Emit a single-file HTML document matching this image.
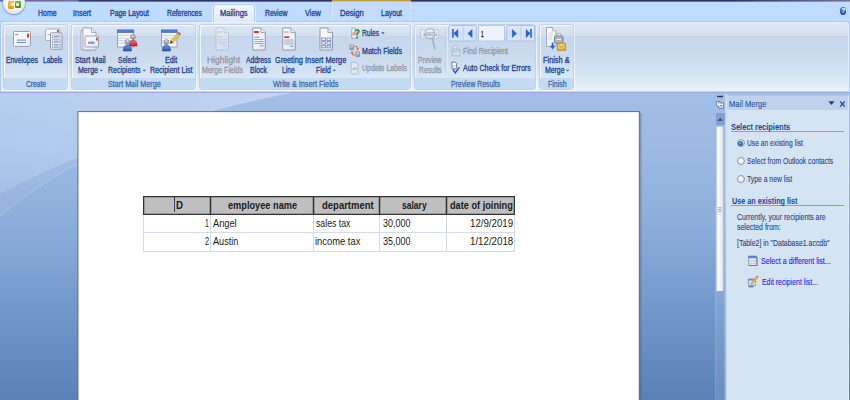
<!DOCTYPE html>
<html lang="en"><head><meta charset="utf-8"><title>Mail Merge - Word</title>
<style>
html,body{margin:0;padding:0}
body{width:850px;height:400px;overflow:hidden;position:relative;background:#bfdbff;font-family:"Liberation Sans","DejaVu Sans",sans-serif}
.abs{position:absolute}
#titlebar{left:0;top:0;width:850px;height:2.400px;background:linear-gradient(rgba(20,20,60,.2) 0,rgba(20,20,60,0) 40%,rgba(191,219,255,.6) 100%),linear-gradient(90deg,#6f6e9c 0,#7a799f 9.100%,#383d72 9.400%,#30356a 30%,#30356a 86%,#7c7ca0 100%)}
#tabrow{left:0;top:3px;width:850px;height:19px;background:#bfdbff}
#ctx{left:332px;top:3px;width:79px;height:18px;background:#c1dcff;border-left:1px solid #d3e6fc;border-right:1px solid #d3e6fc;box-sizing:border-box}
#ctxtop{left:332px;top:0;width:79px;height:2.400px;background:linear-gradient(#8f7a24 0,#d4bf50 45%,#d9d08c 100%)}
#tab-mail{left:212.500px;top:4px;width:42px;height:18px;box-sizing:border-box;border:1px solid #b3cdf0;border-bottom:none;border-radius:3.500px 3.500px 0 0;background:linear-gradient(#f3f7fd,#e6eef8 70%,#e0e9f6);box-shadow:0 0 0 1px rgba(235,243,253,.7)}
#ribbon{left:0;top:20.500px;width:850px;height:70.500px;box-sizing:border-box;border:1px solid #adcaf1;border-bottom:none;border-radius:3px 3px 0 0;box-shadow:inset 0 1px 0 #e9f1fb,inset 1px 0 0 #e3edf9,inset -1px 0 0 #e3edf9;
 background:linear-gradient(#dfe9f6 0,#d4e0f0 13px,#c6d7ed 14.300px,#cad9ee 29px,#d0e0f2 45px,#deebf8 61px,#e9f5fd 69px)}
#ribline{left:0;top:91px;width:850px;height:2px;background:linear-gradient(#b4e1ee 0,#b4e1ee 50%,#96acdc 50%,#96acdc 100%)}
.grp{top:23.500px;height:66px;box-sizing:border-box;border:1px solid #c2d1e7;border-radius:3px;overflow:hidden;
 background:transparent;box-shadow:inset 1px 1px 0 rgba(255,255,255,.7),1px 1px 0 rgba(255,255,255,.6)}
.grp i{position:absolute;left:0;right:0;bottom:0;height:11px;background:#c3daf3}
#doc{left:0;top:93px;width:850px;height:307px;background:linear-gradient(#b0caee 0,#a9c4eb 18%,#98b7e2 41%,#7c9ed1 67%,#5a7fb6 100%)}
#page{left:78px;top:111.500px;width:562px;height:288px;background:#fff;box-sizing:border-box;border-left:1px solid #4b5059;border-top:1px solid #4b5059;border-right:1px solid #8aa0c2}
#vscroll{left:715px;top:126px;width:10px;height:274px;background:linear-gradient(90deg,rgba(255,255,255,.28) 0,rgba(255,255,255,.10) 1.5px,rgba(255,255,255,.10) 8.500px,rgba(255,255,255,.3) 100%)}
#thumb{left:715.500px;top:126px;width:8.500px;height:166px;box-sizing:border-box;border:1px solid #97a9c6;border-radius:1.500px;background:linear-gradient(90deg,#e6ebf3,#fbfcfe 45%,#dfe5ee)}
#split{left:725px;top:94px;width:2px;height:306px;background:linear-gradient(90deg,rgba(255,255,255,.25),#dbe7f5)}
#pane{left:727px;top:95px;width:121.500px;height:305px;background:#d5e4f2;box-sizing:border-box;border-top:1px solid #adc7ea;border-right:1px solid #dde9f6}
#panehead{left:727px;top:96px;width:120.500px;height:13.500px;background:#bfd2ec}
.hr{height:1px;background:#7fa2d6}
.radio{width:6px;height:6px;border-radius:50%;border:1px solid #9099a8;background:radial-gradient(circle at 40% 40%,#ffffff,#d3d7de)}
table#tb{position:absolute;left:143.400px;top:196px;border-collapse:collapse;table-layout:fixed}
#tb td{padding:0;border:1px solid #d4dbea;height:17px}
#tb tr.r2 td{height:18px}
#tb tr.h td{background:#bfbfbf;border:1px solid #333;height:17px;box-shadow:inset 0 0 0 .5px rgba(60,60,60,.55)}
#texts .t{position:absolute;white-space:pre;transform-origin:0 50%;display:block}
svg{position:absolute;overflow:visible}
#upbtn{left:716px;top:112.500px;width:8.500px;height:12.500px;background:#7fa1d5;border-radius:1px}

</style></head>
<body>
<div class="abs" id="tabrow"></div>
<div class="abs" id="titlebar"></div>
<div class="abs" id="ctxtop"></div>
<div class="abs" id="ctx"></div>
<div class="abs" id="ribbon"></div>
<div class="abs" id="tab-mail"></div>
<div class="abs" id="ribline"></div>
<!-- office button -->
<div class="abs" style="left:3px;top:-8px;width:22px;height:22px;border-radius:50%;background:radial-gradient(circle at 50% 45%,#ffffff 0,#f6f8fb 45%,#dfe4ec 70%,#b4bccb 100%);box-shadow:0 0 0 .6px rgba(140,155,185,.9),0 1px 1.500px rgba(70,90,130,.55)"></div>
<div class="abs" style="left:8px;top:.500px;width:6px;height:8px;background:linear-gradient(#f8c040,#f09a10);border-radius:1px"></div>
<div class="abs" style="left:15px;top:.500px;width:5.500px;height:7.300px;background:linear-gradient(#74bc44,#3f9420);border-radius:1px"></div>
<div class="abs" style="left:11px;top:2.500px;width:3.500px;height:3.500px;background:#fbf3d4"></div>
<div class="abs" style="left:16px;top:2.500px;width:3px;height:3px;background:#e4f3d4"></div>
<!-- groups -->
<div class="abs grp" style="left:3px;width:65px"><i></i></div>
<div class="abs grp" style="left:71px;width:125px"><i></i></div>
<div class="abs grp" style="left:199px;width:212px"><i></i></div>
<div class="abs grp" style="left:414px;width:122px"><i></i></div>
<div class="abs grp" style="left:539px;width:35px"><i></i></div>
<!-- help -->
<div class="abs" style="left:839.800px;top:7.200px;width:6.600px;height:8px;border-radius:50%;background:radial-gradient(circle at 40% 30%,#5a8cf0 0,#1e52d0 50%,#0c2f9c 100%);box-shadow:0 0 0 .9px #e3ebf6,0 0 0 1.500px rgba(150,175,215,.6)"></div>
<span class="abs" style="left:841.200px;top:7.400px;font-size:7px;line-height:8px;font-weight:700;font-style:italic;color:#fff">?</span>

<!-- document area -->
<div class="abs" id="doc"></div>
<svg style="left:0;top:93px" width="850" height="307" viewBox="0 93 850 307">
  <defs><linearGradient id="swl" x1="0" y1="0" x2="1" y2="0"><stop offset="0" stop-color="#fff" stop-opacity=".07"/><stop offset="1" stop-color="#fff" stop-opacity=".2"/></linearGradient></defs>
  <path d="M0 93 H294 Q113.800 132.600 0 193.750 Z" fill="url(#swl)"/>
  <path d="M0 193.750 Q113.800 132.600 294 93 H290 Q107.900 126.500 0 216 Z" fill="#5f86c0" opacity=".07"/>
  <path d="M0 216 Q107.900 126.500 290 93 H850 V400 H0 Z" fill="#5f86c0" opacity=".17"/>
  <path d="M0 215.500 Q107.900 126 290 92.500" fill="none" stroke="#d4e3f8" stroke-width="1" opacity=".32"/>
</svg>
<svg style="left:0;top:93px" width="727" height="307" viewBox="0 93 727 307">
  <defs><linearGradient id="psh" x1="0" y1="0" x2="1" y2="0"><stop offset="0" stop-color="#3c5078" stop-opacity=".45"/><stop offset="1" stop-color="#3c5078" stop-opacity="0"/></linearGradient></defs>
  <rect x="639.600" y="113" width="3" height="290" fill="url(#psh)"/>
  <rect x="77.950" y="111.650" width="561.300" height="295" fill="#ffffff" stroke="#58616f" stroke-width=".9"/>
</svg>
<div class="abs" id="vscroll"></div>
<div class="abs" id="upbtn"></div>
<div class="abs" id="split"></div>
<div class="abs" id="pane"></div>
<div class="abs" id="panehead"></div>
<div class="abs hr" style="left:731px;top:131px;width:113px"></div>
<div class="abs hr" style="left:731px;top:205px;width:113px"></div>
<div class="abs radio" style="left:736.500px;top:139.200px"></div>
<div class="abs" style="left:738px;top:140.700px;width:5px;height:5px;border-radius:50%;background:radial-gradient(circle at 45% 45%,#74c8f4 0,#2a6cc8 45%,#12357f 100%)"></div>
<div class="abs radio" style="left:736.500px;top:156.800px"></div>
<div class="abs radio" style="left:736.500px;top:175.200px"></div>

<!-- table -->
<table id="tb">
<colgroup><col style="width:67px"><col style="width:103px"><col style="width:66px"><col style="width:67px"><col style="width:68px"></colgroup>
<tr class="h"><td></td><td></td><td></td><td></td><td></td></tr>
<tr><td></td><td></td><td></td><td></td><td></td></tr>
<tr class="r2"><td></td><td></td><td></td><td></td><td></td></tr>
</table>
<div class="abs" style="left:174px;top:197px;width:1px;height:14.500px;background:linear-gradient(#333,#3a5590 50%,#333)"></div>
<svg id="icons" style="left:0;top:0" width="850" height="400" viewBox="0 0 850 400">
<defs>
 <linearGradient id="pg" x1="0" y1="0" x2="1" y2="1"><stop offset="0" stop-color="#ffffff"/><stop offset="1" stop-color="#e3e9f2"/></linearGradient>
 <linearGradient id="pgf" x1="0" y1="0" x2="1" y2="1"><stop offset="0" stop-color="#f1f5fb"/><stop offset="1" stop-color="#dbe4f1"/></linearGradient>
 <linearGradient id="bl" x1="0" y1="0" x2="0" y2="1"><stop offset="0" stop-color="#6d9be0"/><stop offset="1" stop-color="#2b55b0"/></linearGradient>
 <linearGradient id="rd" x1="0" y1="0" x2="0" y2="1"><stop offset="0" stop-color="#f07a7a"/><stop offset="1" stop-color="#c02030"/></linearGradient>
 <linearGradient id="gy" x1="0" y1="0" x2="0" y2="1"><stop offset="0" stop-color="#e8e8e8"/><stop offset="1" stop-color="#8a8f96"/></linearGradient>
 <linearGradient id="gold" x1="0" y1="0" x2="0" y2="1"><stop offset="0" stop-color="#fbe48c"/><stop offset="1" stop-color="#e0a92a"/></linearGradient>
 <linearGradient id="nav" x1="0" y1="0" x2="0" y2="1"><stop offset="0" stop-color="#e3edfa"/><stop offset=".5" stop-color="#cfdff4"/><stop offset="1" stop-color="#d9e7f8"/></linearGradient>
</defs>

<!-- Envelopes -->
<g>
 <rect x="13.5" y="31.5" width="17" height="15" rx="1" fill="url(#pg)" stroke="#9aa3b2"/>
 <rect x="27" y="33.7" width="2" height="3.8" fill="#e0401c"/>
 <rect x="15" y="34" width="3" height="1" fill="#7d93c6"/>
 <rect x="17" y="39.6" width="9" height="1" fill="#6f86c0"/>
 <rect x="17" y="42" width="9" height="1" fill="#6f86c0"/>
</g>
<!-- Labels -->
<g>
 <rect x="45.5" y="29" width="14.5" height="11.5" rx="1" fill="url(#pg)" stroke="#a7aebb"/>
 <rect x="57" y="30" width="1.8" height="2.6" fill="#e0401c"/>
 <rect x="47.5" y="34" width="4" height="1" fill="#9fb2d8"/>
 <rect x="50.5" y="32.8" width="11.5" height="16.5" rx="1" fill="url(#pg)" stroke="#8e96a5"/>
 <rect x="52.5" y="35" width="7.5" height="3" fill="#eef2f8" stroke="#8f9cb8" stroke-width=".7"/>
 <rect x="52.5" y="39.7" width="7.5" height="3" fill="#eef2f8" stroke="#8f9cb8" stroke-width=".7"/>
 <rect x="52.5" y="44.4" width="7.5" height="3" fill="#eef2f8" stroke="#8f9cb8" stroke-width=".7"/>
 <rect x="54" y="36" width="4.5" height="1" fill="#7d93c6"/>
 <rect x="54" y="40.7" width="4.5" height="1" fill="#7d93c6"/>
 <rect x="54" y="45.4" width="4.5" height="1" fill="#7d93c6"/>
</g>
<!-- Start Mail Merge -->
<g>
 <path d="M81 30.5h10v19.5h-10z" fill="#f4f6fa" stroke="#a4abb8"/>
 <path d="M83 28h8.5l4.5 4.5v17.5h-13z" fill="url(#pg)" stroke="#9aa3b2"/>
 <path d="M91.5 28v4.5h4.5" fill="#dfe5ee" stroke="#9aa3b2" stroke-width=".8"/>
 <rect x="85" y="36" width="13.5" height="11" rx="1" fill="url(#pg)" stroke="#9aa3b2"/>
 <rect x="96" y="37.5" width="1.6" height="3" fill="#e0401c"/>
 <rect x="88" y="41.5" width="6.5" height="2.5" fill="#8c9fce"/>
</g>
<!-- Select Recipients -->
<g>
 <rect x="117.5" y="30" width="16" height="17" fill="#f3f6fb" stroke="#9aa3b2"/>
 <rect x="117.5" y="30" width="16" height="2.6" fill="#4d7fe0" stroke="#3a67c4" stroke-width=".6"/>
 <path d="M118 35.5h15M118 38h15M118 40.500h15M118 43h15" stroke="#c3cbd8" stroke-width=".8"/>
 <path d="M129.300 46c0-4 1.500-6 3.700-6s4 2 4 6z" fill="url(#rd)" stroke="#a01828" stroke-width=".6"/>
 <circle cx="133" cy="36.800" r="2.400" fill="url(#gy)" stroke="#6e737a" stroke-width=".6"/>
 <path d="M123.300 51c0-4 1.500-6 4-6s4.200 2 4.200 6z" fill="url(#bl)" stroke="#214a9c" stroke-width=".6"/>
 <circle cx="127.400" cy="42" r="2.400" fill="url(#gy)" stroke="#6e737a" stroke-width=".6"/>
</g>
<!-- Edit Recipient List -->
<g>
 <rect x="161.500" y="30" width="15.500" height="17" fill="#f3f6fb" stroke="#9aa3b2"/>
 <rect x="161.500" y="30" width="15.500" height="2.600" fill="#4d7fe0" stroke="#3a67c4" stroke-width=".6"/>
 <path d="M162 35.500h15M162 38h15M162 40.500h15M162 43h15" stroke="#c3cbd8" stroke-width=".8"/>
 <path d="M162.300 51c0-4 1.500-6 4-6s4.200 2 4.200 6z" fill="url(#bl)" stroke="#214a9c" stroke-width=".6"/>
 <circle cx="166.300" cy="42" r="2.400" fill="url(#gy)" stroke="#6e737a" stroke-width=".6"/>
 <path d="M170 43.500l1-3 6.800-7.300 2 1.800-6.800 7.400z" fill="#f2c84a" stroke="#b58a1e" stroke-width=".6"/>
 <path d="M177.800 33.200l1-1.100 2 1.800-1 1.100z" fill="#e06a5a" stroke="#a8483c" stroke-width=".5"/>
 <path d="M170 43.500l1-3 2 1.900z" fill="#3a3a3a"/>
</g>
<!-- Highlight Merge Fields (disabled) -->
<g opacity=".55">
 <path d="M216 28h8l4.500 4.500v17.500h-12.500z" fill="url(#pgf)" stroke="#a9b4c6"/>
 <path d="M224 28v4.500h4.500" fill="#e5ebf4" stroke="#a9b4c6" stroke-width=".8"/>
 <rect x="217.500" y="31" width="4.500" height="2" fill="#b9c3d4"/>
 <rect x="217.500" y="36.500" width="5" height="1" fill="#aab6cc"/>
 <rect x="217.500" y="39" width="9" height="1" fill="#c3ccdc"/>
 <rect x="217.500" y="41" width="9" height="1" fill="#c3ccdc"/>
 <rect x="217.500" y="43" width="9" height="1" fill="#c3ccdc"/>
 <rect x="223" y="45.300" width="3.500" height="1" fill="#aab6cc"/>
</g>
<!-- Address Block -->
<g>
 <path d="M252.800 28h8l4.500 4.500v17.500h-12.500z" fill="url(#pg)" stroke="#8f98a8"/>
 <path d="M260.800 28v4.500h4.500" fill="#e5ebf4" stroke="#8f98a8" stroke-width=".8"/>
 <rect x="254.200" y="31" width="4.500" height="2.200" fill="#e32a12"/>
 <rect x="254.200" y="36.700" width="5" height="1" fill="#7d93c6"/>
 <rect x="254.200" y="39" width="9.300" height="1" fill="#9aa8d6"/>
 <rect x="254.200" y="41" width="9.300" height="1" fill="#9aa8d6"/>
 <rect x="254.200" y="43" width="9.300" height="1" fill="#9aa8d6"/>
 <rect x="259.800" y="45.300" width="3.700" height="1" fill="#7d93c6"/>
</g>
<!-- Greeting Line -->
<g>
 <path d="M282.800 28h8l4.500 4.500v17.500h-12.500z" fill="url(#pg)" stroke="#8f98a8"/>
 <path d="M290.800 28v4.500h4.500" fill="#e5ebf4" stroke="#8f98a8" stroke-width=".8"/>
 <rect x="284.200" y="31" width="4.500" height="2.200" fill="#c3cad6"/>
 <rect x="284.200" y="36.400" width="5" height="1.600" fill="#e32a12"/>
 <rect x="284.200" y="39.500" width="9.300" height="1" fill="#9aa8d6"/>
 <rect x="284.200" y="41.500" width="9.300" height="1" fill="#9aa8d6"/>
 <rect x="284.200" y="43.500" width="9.300" height="1" fill="#9aa8d6"/>
 <rect x="289.800" y="45.800" width="3.700" height="1" fill="#7d93c6"/>
</g>
<!-- Insert Merge Field -->
<g>
 <path d="M320 28h8l4.500 4.500v17.500h-12.500z" fill="url(#pg)" stroke="#8f98a8"/>
 <path d="M328 28v4.500h4.500" fill="#e5ebf4" stroke="#8f98a8" stroke-width=".8"/>
 <g fill="#eef2fb" stroke="#6f86c0" stroke-width=".8">
  <rect x="321.700" y="38" width="3.800" height="2.400"/><rect x="327" y="38" width="3.800" height="2.400"/>
  <rect x="321.700" y="41.700" width="3.800" height="2.400"/><rect x="327" y="41.700" width="3.800" height="2.400"/>
  <rect x="321.700" y="45.400" width="3.800" height="2.400"/><rect x="327" y="45.400" width="3.800" height="2.400"/>
 </g>
</g>
<!-- Rules -->
<g>
 <path d="M351.800 28.200h3.600l1.600 1.600v8.500h-5.200z" fill="url(#pg)" stroke="#8f98a8" stroke-width=".8"/>
 <rect x="352.600" y="32.500" width="3.300" height="1" fill="#ee5a2a"/>
 <rect x="352.600" y="34.200" width="3.300" height="1" fill="#ee7a4a"/>
 <path d="M355.200 31.400c0-2.200 3.700-2.200 3.700 0 0 1.500-1.900 1.600-1.900 3.500" fill="none" stroke="#2f9a2a" stroke-width="1.600"/>
 <circle cx="357" cy="37.600" r="1" fill="#2f9a2a"/>
</g>
<path d="M381.300 32.300l1.700 1.900 1.700-1.900z" fill="#3c5a8e"/>
<!-- Match Fields -->
<g>
 <rect x="350" y="45" width="3.600" height="4.600" fill="url(#gy)" stroke="#7f8896" stroke-width=".7"/>
 <rect x="355.900" y="51.800" width="3.600" height="4.600" fill="url(#gy)" stroke="#7f8896" stroke-width=".7"/>
 <path d="M354.600 46.300c2.400-.2 3 .8 3 2.200" fill="none" stroke="#ee6a2c" stroke-width="1.100"/>
 <path d="M356 48.200l1.600 2 1.600-2z" fill="#ee6a2c"/>
 <path d="M355 55c-2.400.2-3-.8-3-2.200" fill="none" stroke="#ee6a2c" stroke-width="1.100"/>
 <path d="M350.400 53.100l1.600-2 1.600 2z" fill="#ee6a2c"/>
</g>
<!-- Update Labels (disabled) -->
<g opacity=".7">
 <path d="M351.300 62.500h4.300l2.300 2.300v9h-6.600z" fill="#eceff5" stroke="#a3acbc" stroke-width=".8"/>
 <path d="M352.800 69.800c0-2.200 3.400-2.600 3.700-.6M356.600 67.800c0 2.200-3.400 2.600-3.700.6" fill="none" stroke="#8f99ab" stroke-width=".9"/>
</g>
<!-- Preview Results icon (disabled) -->
<g opacity=".62">
 <rect x="420.600" y="29.800" width="17.800" height="8.400" fill="#eef2f8" stroke="#aab4c6" stroke-width=".8"/>
 <circle cx="429.800" cy="33.700" r="5" fill="rgba(240,245,251,.8)" stroke="#949fb2" stroke-width="1.200"/>
 <path d="M432.300 38.300l2.500 10.300" stroke="#949fb2" stroke-width="1.900" stroke-linecap="round"/>
</g>
<!-- separator -->
<rect x="445.600" y="29" width="1" height="42" fill="#b4c8e3"/>
<rect x="446.600" y="29" width="1" height="42" fill="#eaf2fb"/>
<!-- nav buttons -->
<rect x="448.800" y="25.500" width="27.500" height="15.500" rx="1.500" fill="url(#nav)" stroke="#a9c1e4"/>
<path d="M463.200 26v14.500" stroke="#b4c9e8" stroke-width=".8"/>
<rect x="478.500" y="25.500" width="26" height="15.500" fill="#edf3fb" stroke="#b7cbe8"/>
<rect x="506.800" y="25.500" width="27.800" height="15.500" rx="1.500" fill="url(#nav)" stroke="#a9c1e4"/>
<path d="M520.900 26v14.500" stroke="#b4c9e8" stroke-width=".8"/>
<g fill="#2a62d6" stroke="#2257c4" stroke-width=".3">
 <rect x="452.200" y="29.300" width="1.400" height="8.400"/>
 <path d="M458 29.300v8.400l-4.300-4.200z"/>
 <path d="M472.200 29.300v8.400l-4.400-4.200z"/>
 <path d="M512.200 29.300v8.400l4.400-4.200z"/>
 <path d="M526 29.300v8.400l4.300-4.200z"/>
 <rect x="530.300" y="29.300" width="1.400" height="8.400"/>
</g>
<!-- Find recipient icon (disabled) -->
<g opacity=".75">
 <rect x="452.400" y="49.600" width="7.400" height="6.200" fill="#f3f5f9" stroke="#9aa3b3" stroke-width=".8"/>
 <path d="M453.500 52.500h5.200M453.500 54.200h5.200" stroke="#c2c9d6" stroke-width=".7"/>
 <path d="M451.600 51.800c.2-2 1.600-2.600 3.600-2.600s3.200.6 3.500 2z" fill="#dde2ea" stroke="#9aa3b3" stroke-width=".7"/>
 <circle cx="455.300" cy="47.300" r="2.100" fill="#e4e8ef" stroke="#9aa3b3" stroke-width=".7"/>
</g>
<!-- Auto check icon -->
<g>
 <path d="M452 62h3l1.600 1.600v5.200h-4.600z" fill="#fff" stroke="#4f5a70" stroke-width=".8"/>
 <path d="M453 65.500h2.600M453 67h2.600" stroke="#9aa8d6" stroke-width=".6"/>
 <path d="M452.900 69.600l2.400 3.200 4.200-5.400" fill="none" stroke="#2a50c0" stroke-width="1.400"/>
</g>
<!-- Finish & Merge -->
<g>
 <path d="M546.500 27.500h6l3.500 3.500v15.500h-9.500z" fill="url(#pg)" stroke="#9aa3b2" stroke-width=".9"/>
 <path d="M552.500 27.500v3.500h3.500" fill="#e5ebf4" stroke="#9aa3b2" stroke-width=".7"/>
 <path d="M548 33h5M548 35h5M548 37h4M548 39h4" stroke="#c0c9d9" stroke-width=".7"/>
 <rect x="554.500" y="36" width="8.500" height="7" rx="1" fill="#b9bec6" stroke="#6f747c" stroke-width=".8"/>
 <path d="M556 36c0-3 5.500-3 5.500 0z" fill="#e8eaee" stroke="#7d828a" stroke-width=".7"/>
 <rect x="556" y="38.500" width="5.500" height="2" fill="#f6f7f9" stroke="#7d828a" stroke-width=".5"/>
 <rect x="557.200" y="43.300" width="8.500" height="7" fill="url(#gold)" stroke="#b88a1c" stroke-width=".8"/>
 <path d="M557.500 43.600l4 3.600 4-3.600" fill="none" stroke="#b88a1c" stroke-width=".7"/>
 <path d="M552.600 42.500v4" stroke="#2f64cc" stroke-width="1.800"/>
 <path d="M549.800 45.800h5.600l-2.800 3.600z" fill="#2f64cc"/>
</g>
<!-- dropdown arrows on big buttons -->
<g fill="#3c5a8e">
 <path d="M99.600 69.700l1.700 1.900 1.700-1.900z"/>
 <path d="M142.600 69.700l1.700 1.900 1.700-1.900z"/>
 <path d="M332.500 69.700l1.700 1.900 1.700-1.900z"/>
 <path d="M566 69.700l1.700 1.900 1.700-1.900z"/>
</g>
<!-- task pane header icons -->
<path d="M828.500 101.200l3 3.800 3-3.800z" fill="#1a3a8a"/>
<path d="M840.200 101.400l4.600 5.200M844.800 101.400l-4.600 5.200" stroke="#1a3a8a" stroke-width="1.200"/>
<!-- scrollbar bits -->
<linearGradient id="thg" x1="0" y1="0" x2="1" y2="0"><stop offset="0" stop-color="#dde3ed"/><stop offset=".35" stop-color="#fbfcfe"/><stop offset="1" stop-color="#d3dae7"/></linearGradient>
<rect x="715.900" y="126" width="8" height="165.500" rx="1.200" fill="url(#thg)" stroke="#8c9fbe" stroke-width=".8"/>
<rect x="717.200" y="95.800" width="5.800" height="1.400" fill="#2a3350"/>
<path d="M716.500 101.500h3.500v1.500h3.500v5.500h-4.500v-2.500h-2.500z" fill="#f1f3f7" stroke="#6b748a" stroke-width=".8"/>
<path d="M718 103h1.500M720 105.500h2.500M720.500 107h2" stroke="#59647c" stroke-width=".7"/>
<path d="M717.300 121l2.900-3.200 2.900 3.200z" fill="#465679"/>
<path d="M717.800 207.700h3.800M717.800 209.500h3.800M717.800 211.300h3.800" stroke="#8a97b0" stroke-width=".8"/>
<!-- pane link icons -->
<g>
 <rect x="748.500" y="256" width="8.200" height="9.300" fill="#f2f4f8" stroke="#8c96ac" stroke-width=".8"/>
 <rect x="748.500" y="256" width="8.200" height="2.200" fill="#4d7fe0"/>
 <path d="M749 260h7.200M749 261.800h7.200M749 263.600h7.200" stroke="#b4bccc" stroke-width=".8"/>
 <path d="M748.800 265.500h8.300v-8.500" fill="none" stroke="#5f6a84" stroke-width=".8"/>
</g>
<g>
 <rect x="748.300" y="279" width="7" height="6.500" fill="#f2f4f8" stroke="#7d88a2" stroke-width=".8"/>
 <rect x="748.300" y="279" width="7" height="1.600" fill="#5d8ae0"/>
 <path d="M749 282.300h5M749 284h5" stroke="#b4bccc" stroke-width=".7"/>
 <path d="M751 284.500l.8-2.300 4.600-5.800 1.500 1.200-4.600 5.800z" fill="#f0b84a" stroke="#b5801e" stroke-width=".5"/>
 <path d="M756.400 276.400l.6-.8 1.500 1.200-.6.800z" fill="#e05a4a"/>
 <path d="M748.500 286.800h5" stroke="#3a62c8" stroke-width="1.100"/>
</g>
</svg>

<div id="texts">
<span class="t" style="left:37.89px;top:7px;font-size:9px;line-height:12px;color:#1a3f8c;font-weight:400;transform:scaleX(0.7727);-webkit-text-stroke:0.3px #1a3f8c">Home</span>
<span class="t" style="left:72.89px;top:7px;font-size:9px;line-height:12px;color:#1a3f8c;font-weight:400;transform:scaleX(0.8052);-webkit-text-stroke:0.3px #1a3f8c">Insert</span>
<span class="t" style="left:110.04px;top:7px;font-size:9px;line-height:12px;color:#1a3f8c;font-weight:400;transform:scaleX(0.7721);-webkit-text-stroke:0.3px #1a3f8c">Page Layout</span>
<span class="t" style="left:167.05px;top:7px;font-size:9px;line-height:12px;color:#1a3f8c;font-weight:400;transform:scaleX(0.7564);-webkit-text-stroke:0.3px #1a3f8c">References</span>
<span class="t" style="left:219.90px;top:7px;font-size:9px;line-height:12px;color:#1a3f8c;font-weight:400;transform:scaleX(0.8351);-webkit-text-stroke:0.3px #1a3f8c">Mailings</span>
<span class="t" style="left:265.05px;top:7px;font-size:9px;line-height:12px;color:#1a3f8c;font-weight:400;transform:scaleX(0.7571);-webkit-text-stroke:0.3px #1a3f8c">Review</span>
<span class="t" style="left:305.35px;top:7px;font-size:9px;line-height:12px;color:#1a3f8c;font-weight:400;transform:scaleX(0.8199);-webkit-text-stroke:0.3px #1a3f8c">View</span>
<span class="t" style="left:340.00px;top:7px;font-size:9px;line-height:12px;color:#1a3f8c;font-weight:400;transform:scaleX(0.8502);-webkit-text-stroke:0.3px #1a3f8c">Design</span>
<span class="t" style="left:381.03px;top:7px;font-size:9px;line-height:12px;color:#1a3f8c;font-weight:400;transform:scaleX(0.7778);-webkit-text-stroke:0.3px #1a3f8c">Layout</span>
<span class="t" style="left:26.14px;top:78px;font-size:9px;line-height:12px;color:#3e6aaa;font-weight:400;transform:scaleX(0.7421);-webkit-text-stroke:0.3px #3e6aaa">Create</span>
<span class="t" style="left:107.94px;top:78px;font-size:9px;line-height:12px;color:#3e6aaa;font-weight:400;transform:scaleX(0.7972);-webkit-text-stroke:0.3px #3e6aaa">Start Mail Merge</span>
<span class="t" style="left:273.31px;top:78px;font-size:9px;line-height:12px;color:#3e6aaa;font-weight:400;transform:scaleX(0.8094);-webkit-text-stroke:0.3px #3e6aaa">Write &amp; Insert Fields</span>
<span class="t" style="left:451.05px;top:78px;font-size:9px;line-height:12px;color:#3e6aaa;font-weight:400;transform:scaleX(0.7614);-webkit-text-stroke:0.3px #3e6aaa">Preview Results</span>
<span class="t" style="left:547.93px;top:78px;font-size:9px;line-height:12px;color:#3e6aaa;font-weight:400;transform:scaleX(0.7733);-webkit-text-stroke:0.3px #3e6aaa">Finish</span>
<span class="t" style="left:6.27px;top:54px;font-size:9px;line-height:12px;color:#1a3f8c;font-weight:400;transform:scaleX(0.7583);-webkit-text-stroke:0.3px #1a3f8c">Envelopes</span>
<span class="t" style="left:43.08px;top:54px;font-size:9px;line-height:12px;color:#1a3f8c;font-weight:400;transform:scaleX(0.7321);-webkit-text-stroke:0.3px #1a3f8c">Labels</span>
<span class="t" style="left:75.15px;top:54px;font-size:9px;line-height:12px;color:#1a3f8c;font-weight:400;transform:scaleX(0.8076);-webkit-text-stroke:0.3px #1a3f8c">Start Mail</span>
<span class="t" style="left:77.93px;top:64px;font-size:9px;line-height:12px;color:#1a3f8c;font-weight:400;transform:scaleX(0.7833);-webkit-text-stroke:0.3px #1a3f8c">Merge</span>
<span class="t" style="left:117.95px;top:54px;font-size:9px;line-height:12px;color:#1a3f8c;font-weight:400;transform:scaleX(0.7325);-webkit-text-stroke:0.3px #1a3f8c">Select</span>
<span class="t" style="left:108.03px;top:64px;font-size:9px;line-height:12px;color:#1a3f8c;font-weight:400;transform:scaleX(0.7749);-webkit-text-stroke:0.3px #1a3f8c">Recipients</span>
<span class="t" style="left:164.91px;top:54px;font-size:9px;line-height:12px;color:#1a3f8c;font-weight:400;transform:scaleX(0.7966);-webkit-text-stroke:0.3px #1a3f8c">Edit</span>
<span class="t" style="left:149.93px;top:64px;font-size:9px;line-height:12px;color:#1a3f8c;font-weight:400;transform:scaleX(0.7867);-webkit-text-stroke:0.3px #1a3f8c">Recipient List</span>
<span class="t" style="left:206.89px;top:54px;font-size:9px;line-height:12px;color:#9396a6;font-weight:400;transform:scaleX(0.9436);-webkit-text-stroke:0.3px #9396a6">Highlight</span>
<span class="t" style="left:201.92px;top:64px;font-size:9px;line-height:12px;color:#9396a6;font-weight:400;transform:scaleX(0.7894);-webkit-text-stroke:0.3px #9396a6">Merge Fields</span>
<span class="t" style="left:246.28px;top:54px;font-size:9px;line-height:12px;color:#1a3f8c;font-weight:400;transform:scaleX(0.7541);-webkit-text-stroke:0.3px #1a3f8c">Address</span>
<span class="t" style="left:249.92px;top:64px;font-size:9px;line-height:12px;color:#1a3f8c;font-weight:400;transform:scaleX(0.7765);-webkit-text-stroke:0.3px #1a3f8c">Block</span>
<span class="t" style="left:275.03px;top:54px;font-size:9px;line-height:12px;color:#1a3f8c;font-weight:400;transform:scaleX(0.8044);-webkit-text-stroke:0.3px #1a3f8c">Greeting</span>
<span class="t" style="left:282.05px;top:64px;font-size:9px;line-height:12px;color:#1a3f8c;font-weight:400;transform:scaleX(0.7551);-webkit-text-stroke:0.3px #1a3f8c">Line</span>
<span class="t" style="left:304.87px;top:54px;font-size:9px;line-height:12px;color:#1a3f8c;font-weight:400;transform:scaleX(0.8167);-webkit-text-stroke:0.3px #1a3f8c">Insert Merge</span>
<span class="t" style="left:316.05px;top:64px;font-size:9px;line-height:12px;color:#1a3f8c;font-weight:400;transform:scaleX(0.7590);-webkit-text-stroke:0.3px #1a3f8c">Field</span>
<span class="t" style="left:362.06px;top:27px;font-size:9px;line-height:12px;color:#1a3f8c;font-weight:400;transform:scaleX(0.7434);-webkit-text-stroke:0.3px #1a3f8c">Rules</span>
<span class="t" style="left:362.02px;top:45px;font-size:9px;line-height:12px;color:#1a3f8c;font-weight:400;transform:scaleX(0.7855);-webkit-text-stroke:0.3px #1a3f8c">Match Fields</span>
<span class="t" style="left:362.04px;top:62px;font-size:9px;line-height:12px;color:#9396a6;font-weight:400;transform:scaleX(0.7738);-webkit-text-stroke:0.3px #9396a6">Update Labels</span>
<span class="t" style="left:418.16px;top:54px;font-size:9px;line-height:12px;color:#9396a6;font-weight:400;transform:scaleX(0.7374);-webkit-text-stroke:0.3px #9396a6">Preview</span>
<span class="t" style="left:418.60px;top:64px;font-size:9px;line-height:12px;color:#9396a6;font-weight:400;transform:scaleX(0.7559);-webkit-text-stroke:0.3px #9396a6">Results</span>
<span class="t" style="left:481.08px;top:28px;font-size:9px;line-height:12px;color:#1a1208;font-weight:400;transform:scaleX(0.5383);-webkit-text-stroke:0.3px #1a1208">1</span>
<span class="t" style="left:463.15px;top:45px;font-size:9px;line-height:12px;color:#9396a6;font-weight:400;transform:scaleX(0.7828);-webkit-text-stroke:0.3px #9396a6">Find Recipient</span>
<span class="t" style="left:463.41px;top:62px;font-size:9px;line-height:12px;color:#1a3f8c;font-weight:400;transform:scaleX(0.7821);-webkit-text-stroke:0.3px #1a3f8c">Auto Check for Errors</span>
<span class="t" style="left:543.01px;top:54px;font-size:9px;line-height:12px;color:#1a3f8c;font-weight:400;transform:scaleX(0.8171);-webkit-text-stroke:0.3px #1a3f8c">Finish &amp;</span>
<span class="t" style="left:544.50px;top:64px;font-size:9px;line-height:12px;color:#1a3f8c;font-weight:400;transform:scaleX(0.7654);-webkit-text-stroke:0.3px #1a3f8c">Merge</span>
<span class="t" style="left:728.76px;top:97px;font-size:9.5px;line-height:13px;color:#2a55a0;font-weight:400;transform:scaleX(0.7996);-webkit-text-stroke:0.1px #2a55a0">Mail Merge</span>
<span class="t" style="left:730.90px;top:120px;font-size:9.5px;line-height:13px;color:#1c4596;font-weight:700;transform:scaleX(0.7849)">Select recipients</span>
<span class="t" style="left:746.90px;top:136px;font-size:9.5px;line-height:13px;color:#28437f;font-weight:400;transform:scaleX(0.7056);-webkit-text-stroke:0.1px #28437f">Use an existing list</span>
<span class="t" style="left:746.87px;top:154px;font-size:9.5px;line-height:13px;color:#28437f;font-weight:400;transform:scaleX(0.7096);-webkit-text-stroke:0.1px #28437f">Select from Outlook contacts</span>
<span class="t" style="left:747.21px;top:172px;font-size:9.5px;line-height:13px;color:#28437f;font-weight:400;transform:scaleX(0.7175);-webkit-text-stroke:0.1px #28437f">Type a new list</span>
<span class="t" style="left:731.63px;top:194px;font-size:9.5px;line-height:13px;color:#1c4596;font-weight:700;transform:scaleX(0.7608)">Use an existing list</span>
<span class="t" style="left:736.65px;top:210px;font-size:9.5px;line-height:13px;color:#28437f;font-weight:400;transform:scaleX(0.7311);-webkit-text-stroke:0.1px #28437f">Currently, your recipients are</span>
<span class="t" style="left:736.66px;top:220px;font-size:9.5px;line-height:13px;color:#28437f;font-weight:400;transform:scaleX(0.7341);-webkit-text-stroke:0.1px #28437f">selected from:</span>
<span class="t" style="left:736.57px;top:236px;font-size:9.5px;line-height:13px;color:#28437f;font-weight:400;transform:scaleX(0.7308);-webkit-text-stroke:0.1px #28437f">[Table2] in &quot;Database1.accdb&quot;</span>
<span class="t" style="left:761.44px;top:254px;font-size:9.5px;line-height:13px;color:#1c1ce8;font-weight:400;transform:scaleX(0.7477);-webkit-text-stroke:0.1px #1c1ce8">Select a different list...</span>
<span class="t" style="left:761.50px;top:275px;font-size:9.5px;line-height:13px;color:#1c1ce8;font-weight:400;transform:scaleX(0.7247);-webkit-text-stroke:0.1px #1c1ce8">Edit recipient list...</span>
<span class="t" style="left:175.91px;top:199px;font-size:10px;line-height:13px;color:#1a1a1a;font-weight:700;transform:scaleX(0.9734)">D</span>
<span class="t" style="left:228.02px;top:199px;font-size:10px;line-height:13px;color:#1a1a1a;font-weight:700;transform:scaleX(0.9204)">employee name</span>
<span class="t" style="left:321.89px;top:199px;font-size:10px;line-height:13px;color:#1a1a1a;font-weight:700;transform:scaleX(0.9497)">department</span>
<span class="t" style="left:401.83px;top:199px;font-size:10px;line-height:13px;color:#1a1a1a;font-weight:700;transform:scaleX(0.8540)">salary</span>
<span class="t" style="left:450.01px;top:199px;font-size:10px;line-height:13px;color:#1a1a1a;font-weight:700;transform:scaleX(0.9195)">date of joining</span>
<span class="t" style="left:204.73px;top:217px;font-size:10px;line-height:13px;color:#1a1a1a;font-weight:400;transform:scaleX(0.6831)">1</span>
<span class="t" style="left:213.30px;top:217px;font-size:10px;line-height:13px;color:#1a1a1a;font-weight:400;transform:scaleX(0.9250)">Angel</span>
<span class="t" style="left:315.89px;top:217px;font-size:10px;line-height:13px;color:#1a1a1a;font-weight:400;transform:scaleX(0.8724)">sales tax</span>
<span class="t" style="left:382.82px;top:217px;font-size:10px;line-height:13px;color:#1a1a1a;font-weight:400;transform:scaleX(0.8986)">30,000</span>
<span class="t" style="left:470.34px;top:217px;font-size:10px;line-height:13px;color:#1a1a1a;font-weight:400;transform:scaleX(0.9694)">12/9/2019</span>
<span class="t" style="left:205.16px;top:235px;font-size:10px;line-height:13px;color:#1a1a1a;font-weight:400;transform:scaleX(0.7371)">2</span>
<span class="t" style="left:213.30px;top:235px;font-size:10px;line-height:13px;color:#1a1a1a;font-weight:400;transform:scaleX(0.9113)">Austin</span>
<span class="t" style="left:315.10px;top:235px;font-size:10px;line-height:13px;color:#1a1a1a;font-weight:400;transform:scaleX(0.9374)">income tax</span>
<span class="t" style="left:382.82px;top:235px;font-size:10px;line-height:13px;color:#1a1a1a;font-weight:400;transform:scaleX(0.8986)">35,000</span>
<span class="t" style="left:470.34px;top:235px;font-size:10px;line-height:13px;color:#1a1a1a;font-weight:400;transform:scaleX(0.9706)">1/12/2018</span>
<span class="t" style="left:422.86px;top:30.8px;font-size:4.5px;line-height:7px;color:#9aa5b8;font-weight:700;transform:scaleX(0.9762)">«ABC»</span>
</div>
</body></html>
